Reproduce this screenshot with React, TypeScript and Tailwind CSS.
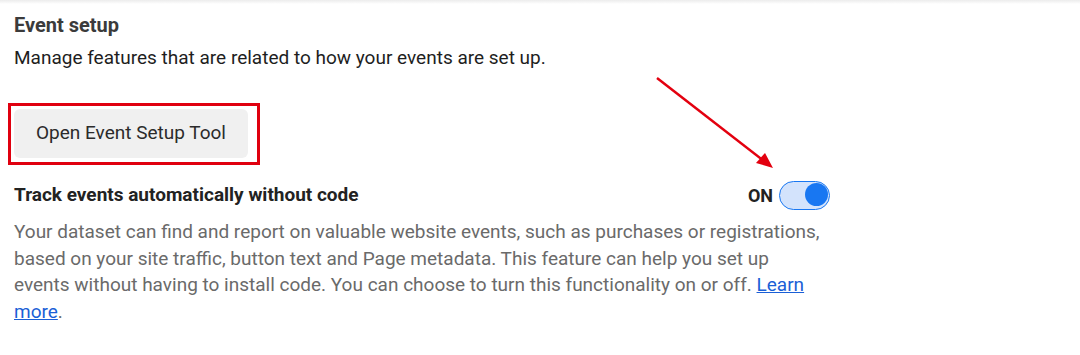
import React from "react";

export default function App() {
  return (
    <div
      className="relative w-[1080px] h-[355px] bg-white overflow-hidden"
      style={{ fontFamily: "Roboto, 'Liberation Sans', sans-serif" }}
    >
      <div className="h-[4px] bg-gradient-to-b from-[#ececec] to-white" />
      <div className="pl-[14px] w-[830px]">
        <h2 className="mt-[8px] text-[20px] leading-[26px] font-bold text-[#3b3b3b]">Event setup</h2>
        <p className="mt-[8px] text-[19px] leading-[24px] text-[#1e1e1e]">
          Manage features that are related to how your events are set up.
        </p>
        <div className="mt-[33px] -ml-[6px] w-[252px] h-[62px] border-[3px] border-[#e0000f] pl-[3px] pt-[3px]">
          <button className="w-[234px] h-[49px] rounded-[6px] bg-[#f0f0f0] text-[19px] text-[#2b2b2b]">
            Open Event Setup Tool
          </button>
        </div>
        <div className="mt-[15px] flex items-center justify-between h-[30px]">
          <span className="text-[19px] font-bold text-[#222]">Track events automatically without code</span>
          <div className="flex items-center gap-[6px]">
            <span className="text-[18px] font-bold text-[#222]">ON</span>
            <div className="relative w-[51px] h-[29px] rounded-full bg-[#d3e3fc] border-[1.5px] border-[#1877f2]">
              <div className="absolute right-[1px] top-[1.5px] w-[23px] h-[23px] rounded-full bg-[#1877f2]" />
            </div>
          </div>
        </div>
        <p className="mt-[9px] whitespace-nowrap text-[19px] leading-[26.7px] text-[#6a6a6a]">
          Your dataset can find and report on valuable website events, such as purchases or registrations,
          <br />
          based on your site traffic, button text and Page metadata. This feature can help you set up
          <br />
          events without having to install code. You can choose to turn this functionality on or off.{" "}
          <a href="#" className="text-[#1a5fd6] underline">
            Learn
            <br />
            more
          </a>
          .
        </p>
      </div>
      <svg className="absolute left-0 top-0" width="1080" height="355" viewBox="0 0 1080 355">
        <line x1="657" y1="78" x2="764" y2="161" stroke="#e3000f" strokeWidth="2.5" />
        <polygon points="773,168 756,163 765,153" fill="#e3000f" />
      </svg>
    </div>
  );
}
